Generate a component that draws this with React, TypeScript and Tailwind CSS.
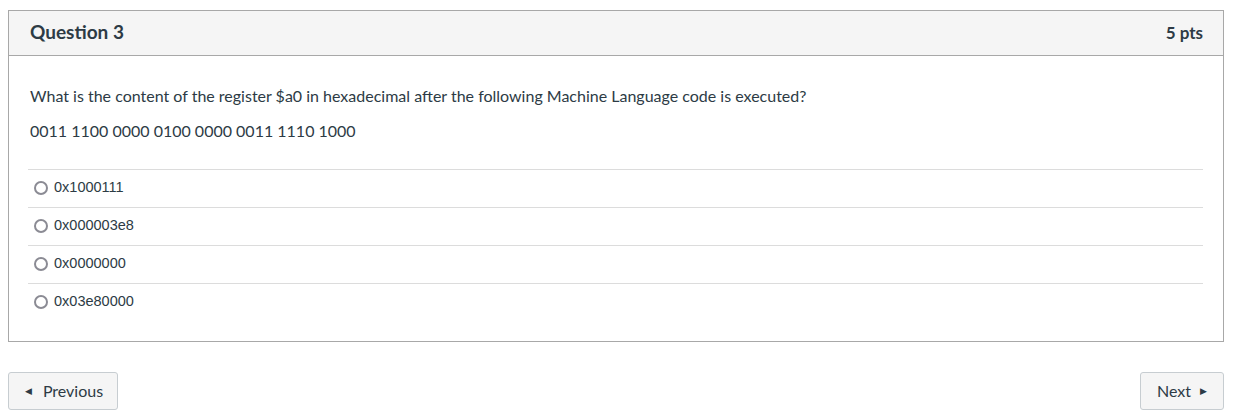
import React from 'react';

const ANSWERS = ['0x1000111', '0x000003e8', '0x0000000', '0x03e80000'];

export default function App() {
  return (
    <div className="min-h-screen bg-white px-2 pt-[10px] text-[#2d3b45]" style={{ fontFamily: 'Lato, "Liberation Sans", sans-serif' }}>
      <div className="w-[1216px] border border-[#a8a8a8]">
        {/* Header */}
        <div className="flex h-[45px] items-center justify-between border-b border-[#a8a8a8] bg-[#f5f5f5] pb-[1px] pl-[21px] pr-[20px]">
          <h2 className="text-[19px] font-bold text-[#2d3b45]">Question 3</h2>
          <span className="text-[17px] font-bold text-[#2d3b45]">5 pts</span>
        </div>

        {/* Body */}
        <div className="px-[19px] pb-[20px] pt-[29px]">
          <p className="mb-[13px] pl-[2px] text-[16px] leading-[22px]">
            What is the content of the register $a0 in hexadecimal after the following Machine Language code is executed?
          </p>
          <p className="mb-[27px] pl-[2px] text-[16px] leading-[22px]">0011 1100 0000 0100 0000 0011 1110 1000</p>

          <div className="w-[1175px]">
            {ANSWERS.map((a) => (
              <label key={a} className="flex h-[38px] items-center gap-[6px] border-t border-[#dcdcdc] pb-[1px] pl-[6px]">
                <span className="h-[14px] w-[14px] rounded-full border-2 border-[#8b8b94] bg-white" />
                <span className="text-[14.5px] text-[#2d3b45]" style={{ fontFamily: '"Liberation Sans", Arial, sans-serif' }}>
                  {a}
                </span>
              </label>
            ))}
          </div>
        </div>
      </div>

      {/* Nav buttons */}
      <div className="mt-[30px] flex w-[1216px] justify-between">
        <button className="flex h-[38px] w-[110px] items-center justify-center gap-[11px] rounded-[3px] border border-[#c7cdd1] bg-[#f5f5f5] pl-[2px] text-[16px] text-[#2d3b45]">
          <span className="text-[9px]">◀</span>
          Previous
        </button>
        <button className="flex h-[38px] w-[84px] items-center justify-center gap-[9px] rounded-[3px] border border-[#c7cdd1] bg-[#f5f5f5] text-[16px] text-[#2d3b45]">
          Next
          <span className="text-[9px]">▶</span>
        </button>
      </div>
    </div>
  );
}
